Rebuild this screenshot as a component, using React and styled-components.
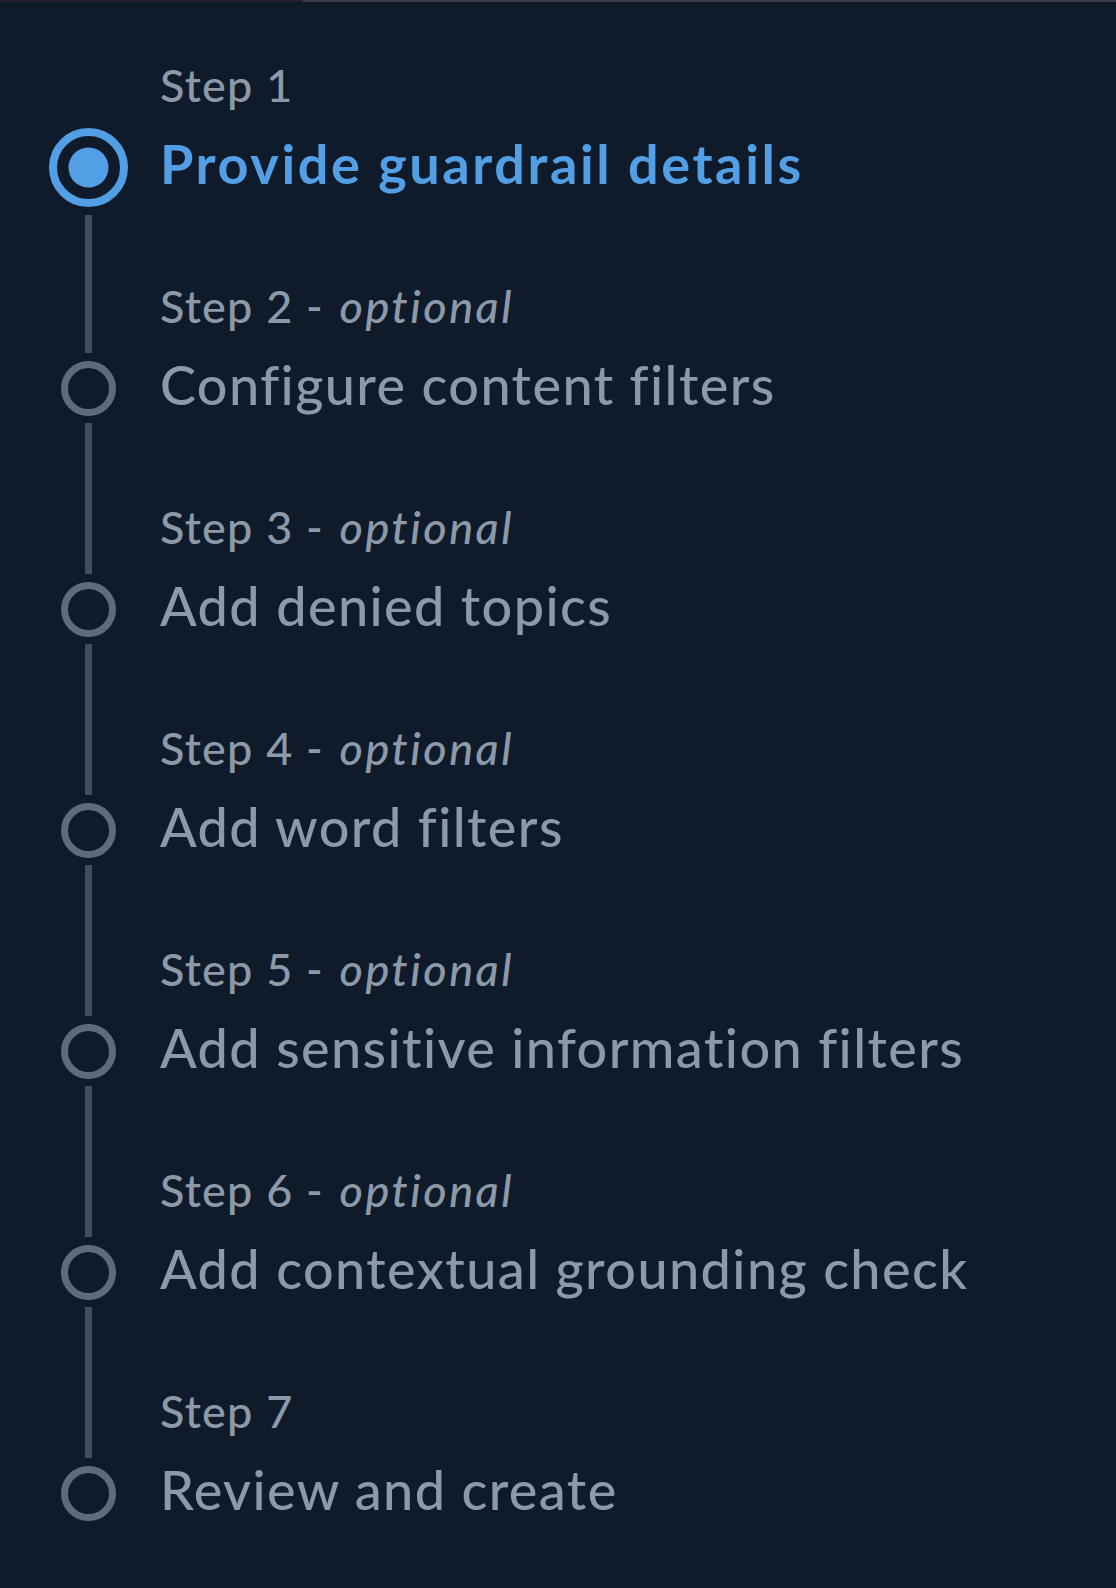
import React from 'react'
import styled, { createGlobalStyle } from 'styled-components'

const steps = [
  { label: 'Step 1', title: 'Provide guardrail details', active: true },
  { label: 'Step 2', optional: true, title: 'Configure content filters' },
  { label: 'Step 3', optional: true, title: 'Add denied topics' },
  { label: 'Step 4', optional: true, title: 'Add word filters' },
  { label: 'Step 5', optional: true, title: 'Add sensitive information filters' },
  { label: 'Step 6', optional: true, title: 'Add contextual grounding check' },
  { label: 'Step 7', title: 'Review and create' },
]

const GlobalStyle = createGlobalStyle`
  html, body {
    margin: 0;
    padding: 0;
    background: #0f1b2a;
  }
  body {
    font-family: Lato, "Open Sans", sans-serif;
    font-variant-ligatures: none;
    -webkit-font-smoothing: antialiased;
  }
`

const Page = styled.div`
  min-height: 1588px;
  background: #0f1b2a;
`

const TopEdge = styled.div`
  display: grid;
  grid-template-columns: 303px 1fr;
  height: 2px;
  span:first-child { background: #2b1d30; }
  span:last-child { background: #3f3b4a; }
`

const StepList = styled.ol`
  list-style: none;
  margin: 0;
  padding: 55px 0 0 61px;
`

const StepItem = styled.li`
  display: grid;
  grid-template-columns: 55px 1fr;
  grid-template-rows: auto 55px;
  column-gap: 44px;
`

const Connector = styled.div`
  grid-column: 1;
  grid-row: 1;
  justify-self: center;
  width: 7.5px;
  margin: ${p => (p.$afterActive ? '20px' : '7px')} 0 8px;
  background: #414d5c;
`

const Label = styled.div`
  grid-column: 2;
  grid-row: 1;
  align-self: end;
  font-size: 45px;
  font-weight: 500;
  letter-spacing: 1.2px;
  line-height: 56px;
  color: #8d99a8;
  margin-bottom: 27px;
  padding-top: ${p => (p.$first ? '0' : '83px')};
  em {
    font-style: italic;
    letter-spacing: 2.5px;
    margin-left: 3px;
  }
`

const Marker = styled.svg`
  grid-column: 1;
  grid-row: 2;
  overflow: visible;
  display: block;
`

const Title = styled.div`
  grid-column: 2;
  grid-row: 2;
  align-self: start;
  font-size: 54px;
  line-height: 47px;
  white-space: nowrap;
  letter-spacing: ${p => (p.$active ? '2.6px' : '1.4px')};
  font-weight: ${p => (p.$active ? 700 : 500)};
  color: ${p => (p.$active ? '#539fe5' : '#8d99a8')};
`

const StepMarker = ({ active }) => (
  <Marker width="55" height="55" viewBox="0 0 55 55">
    {active ? (
      <>
        <circle cx="27.5" cy="27.5" r="35.5" fill="none" stroke="#539fe5" strokeWidth="8" />
        <circle cx="27.5" cy="27.5" r="20" fill="#539fe5" />
      </>
    ) : (
      <circle cx="27.5" cy="27.5" r="24" fill="none" stroke="#5f6b7a" strokeWidth="7" />
    )}
  </Marker>
)

export default function App() {
  return (
    <Page>
      <GlobalStyle />
      <TopEdge><span /><span /></TopEdge>
      <StepList>
        {steps.map((s, i) => (
          <StepItem key={s.label}>
            {i > 0 && <Connector $afterActive={steps[i - 1].active} />}
            <Label $first={i === 0}>
              {s.label}
              {s.optional && <> - <em>optional</em></>}
            </Label>
            <StepMarker active={s.active} />
            <Title $active={s.active}>{s.title}</Title>
          </StepItem>
        ))}
      </StepList>
    </Page>
  )
}
